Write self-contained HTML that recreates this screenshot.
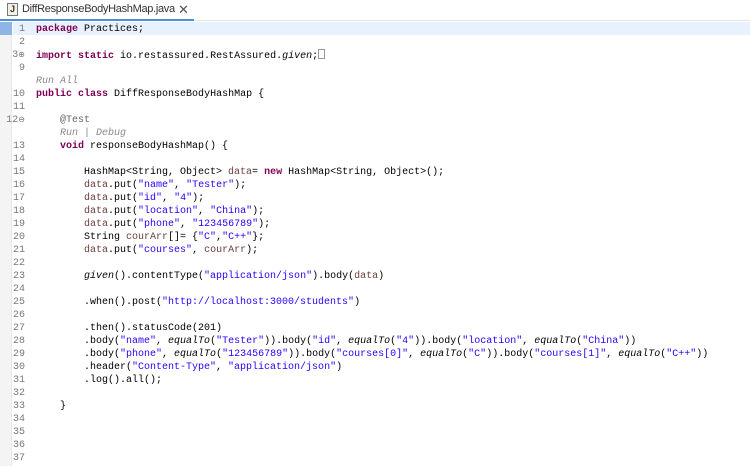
<!DOCTYPE html>
<html><head><meta charset="utf-8"><style>
*{margin:0;padding:0;box-sizing:border-box}
body{width:750px;height:465px;background:#fff;position:relative;overflow:hidden;font-family:"Liberation Mono",monospace;font-size:10px}
.tabbar{position:absolute;left:0;top:0;width:750px;height:21px;background:#fff;border-bottom:1px solid #e4e4e4}
.tab{position:absolute;left:0;top:0;width:194px;height:21px;background:#fff;border-bottom:2px solid #4a90d9;font-family:"Liberation Sans",sans-serif;font-size:11px;letter-spacing:-0.3px;color:#333;padding-left:22px;line-height:19px}
.ico{position:absolute;left:7px;top:3px;width:11px;height:13px;border:1px solid #6a7a90;background:#f5f0dc;font-size:9px;line-height:11px;text-align:center;color:#334;font-weight:bold;letter-spacing:0}
.x{position:absolute;left:178px;top:0;font-size:13px;color:#555}
.ruler{position:absolute;left:0;top:22px;width:12px;height:444px;background:#f4f4f4;border-right:1px solid #e8e8e8}
.hl{position:absolute;left:13px;top:22px;width:737px;height:13px;background:#e8f2fe}
.hlm{position:absolute;left:0;top:22px;width:12px;height:13px;background:#8fb5e6}
.l{position:absolute;left:0;height:13px;line-height:13px;white-space:pre;width:750px;margin-top:2px}
.n{position:absolute;right:725px;color:#787878;text-align:right}
.c{position:absolute;left:36px;color:#000}
.k{color:#7f0055;font-weight:bold}
.s{color:#2a00ff}
.v{color:#6a3e3e}
.i{font-style:italic}
.g{color:#8a8a8a;font-style:italic}
.a{color:#646464}
</style></head><body>
<div class="tabbar"><div class="tab"><div class="ico">J</div>DiffResponseBodyHashMap.java<span class="x">✕</span></div></div>
<div class="ruler"></div><div class="hl"></div><div class="hlm"></div>
<div class="l" style="top:21px"><span class="n">1</span><span class="c"><span class="k">package</span> Practices;</span></div>
<div class="l" style="top:34px"><span class="n">2</span></div>
<div class="l" style="top:47px"><span class="n">3<span style="font-size:8px">⊕</span></span><span class="c"><span class="k">import</span> <span class="k">static</span> io.restassured.RestAssured.<span class="i">given</span>;<span style="border:1px solid #999;display:inline-block;width:7px;height:10px;vertical-align:-1px"></span></span></div>
<div class="l" style="top:60px"><span class="n">9</span></div>
<div class="l" style="top:73px"><span class="c g">Run All</span></div>
<div class="l" style="top:86px"><span class="n">10</span><span class="c"><span class="k">public</span> <span class="k">class</span> DiffResponseBodyHashMap {</span></div>
<div class="l" style="top:99px"><span class="n">11</span></div>
<div class="l" style="top:112px"><span class="n">12<span style="font-size:8px">⊖</span></span><span class="c">    <span class="a">@Test</span></span></div>
<div class="l" style="top:125px"><span class="c g">    Run | Debug</span></div>
<div class="l" style="top:138px"><span class="n">13</span><span class="c">    <span class="k">void</span> responseBodyHashMap() {</span></div>
<div class="l" style="top:151px"><span class="n">14</span></div>
<div class="l" style="top:164px"><span class="n">15</span><span class="c">        HashMap&lt;String, Object&gt; <span class="v">data</span>= <span class="k">new</span> HashMap&lt;String, Object&gt;();</span></div>
<div class="l" style="top:177px"><span class="n">16</span><span class="c">        <span class="v">data</span>.put(<span class="s">"name"</span>, <span class="s">"Tester"</span>);</span></div>
<div class="l" style="top:190px"><span class="n">17</span><span class="c">        <span class="v">data</span>.put(<span class="s">"id"</span>, <span class="s">"4"</span>);</span></div>
<div class="l" style="top:203px"><span class="n">18</span><span class="c">        <span class="v">data</span>.put(<span class="s">"location"</span>, <span class="s">"China"</span>);</span></div>
<div class="l" style="top:216px"><span class="n">19</span><span class="c">        <span class="v">data</span>.put(<span class="s">"phone"</span>, <span class="s">"123456789"</span>);</span></div>
<div class="l" style="top:229px"><span class="n">20</span><span class="c">        String <span class="v">courArr</span>[]= {<span class="s">"C"</span>,<span class="s">"C++"</span>};</span></div>
<div class="l" style="top:242px"><span class="n">21</span><span class="c">        <span class="v">data</span>.put(<span class="s">"courses"</span>, <span class="v">courArr</span>);</span></div>
<div class="l" style="top:255px"><span class="n">22</span></div>
<div class="l" style="top:268px"><span class="n">23</span><span class="c">        <span class="i">given</span>().contentType(<span class="s">"application/json"</span>).body(<span class="v">data</span>)</span></div>
<div class="l" style="top:281px"><span class="n">24</span></div>
<div class="l" style="top:294px"><span class="n">25</span><span class="c">        .when().post(<span class="s">"http://localhost:3000/students"</span>)</span></div>
<div class="l" style="top:307px"><span class="n">26</span></div>
<div class="l" style="top:320px"><span class="n">27</span><span class="c">        .then().statusCode(201)</span></div>
<div class="l" style="top:333px"><span class="n">28</span><span class="c">        .body(<span class="s">"name"</span>, <span class="i">equalTo</span>(<span class="s">"Tester"</span>)).body(<span class="s">"id"</span>, <span class="i">equalTo</span>(<span class="s">"4"</span>)).body(<span class="s">"location"</span>, <span class="i">equalTo</span>(<span class="s">"China"</span>))</span></div>
<div class="l" style="top:346px"><span class="n">29</span><span class="c">        .body(<span class="s">"phone"</span>, <span class="i">equalTo</span>(<span class="s">"123456789"</span>)).body(<span class="s">"courses[0]"</span>, <span class="i">equalTo</span>(<span class="s">"C"</span>)).body(<span class="s">"courses[1]"</span>, <span class="i">equalTo</span>(<span class="s">"C++"</span>))</span></div>
<div class="l" style="top:359px"><span class="n">30</span><span class="c">        .header(<span class="s">"Content-Type"</span>, <span class="s">"application/json"</span>)</span></div>
<div class="l" style="top:372px"><span class="n">31</span><span class="c">        .log().all();</span></div>
<div class="l" style="top:385px"><span class="n">32</span></div>
<div class="l" style="top:398px"><span class="n">33</span><span class="c">    }</span></div>
<div class="l" style="top:411px"><span class="n">34</span></div>
<div class="l" style="top:424px"><span class="n">35</span></div>
<div class="l" style="top:437px"><span class="n">36</span></div>
<div class="l" style="top:450px"><span class="n">37</span></div>
</body></html>
